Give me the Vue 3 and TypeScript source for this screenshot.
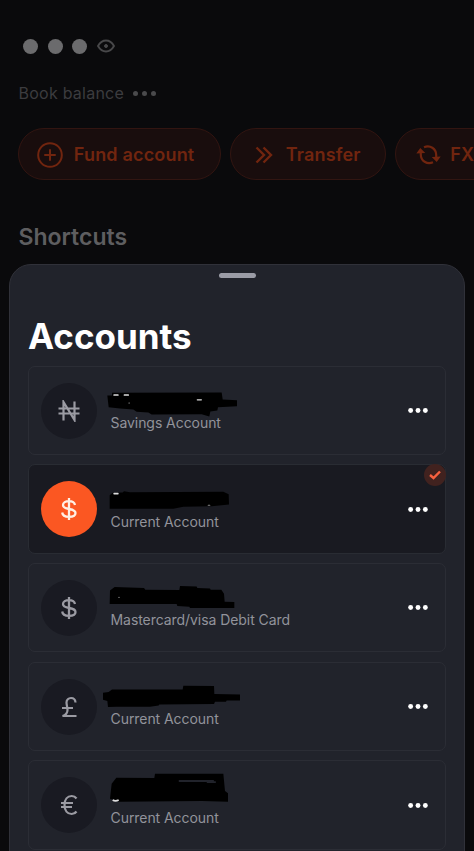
<script setup lang="ts">
interface Mark { x: number; y: number; w: number; h: number }
interface Account {
  symbol: string
  label: string
  selected?: boolean
  box: string
  mask: string
  marks: Mark[]
}

const accounts: Account[] = [
  {
    symbol: 'naira', label: 'Savings Account', box: '240 76.5 450 90',
    mask: '262,108 276,108 276,100 605,99 608,120 651,122 651,140 594,143 592,153 571,156 568,171 545,164 395,165 385,159 350,157 340,150 300,147 266,143',
    marks: [{ x: 280, y: 104, w: 16, h: 5 }, { x: 311, y: 104, w: 16, h: 5 }, { x: 325, y: 129, w: 5, h: 3 }, { x: 530, y: 119, w: 16, h: 4 }],
  },
  {
    symbol: 'dollar', label: 'Current Account', selected: true, box: '240 72.6 450 90',
    mask: '269,106 278,99 308,98 312,94 330,97 610,96 626,103 627,134 575,139 490,141 460,147 269,147',
    marks: [{ x: 280, y: 99, w: 16, h: 5 }, { x: 563, y: 135, w: 8, h: 3 }],
  },
  {
    symbol: 'dollar', label: 'Mastercard/visa Debit Card', box: '240 74.7 450 90',
    mask: '270,100 284,90 372,93 376,98 478,99 480,87 530,88 532,93 570,94 572,98 604,98 612,110 614,134 643,135 643,153 510,153 508,149 472,147 470,141 269,141',
    marks: [{ x: 295, y: 119, w: 4, h: 4 }],
  },
  {
    symbol: 'pound', label: 'Current Account', box: '240 79.8 450 90',
    mask: '249,115 266,113 276,105 488,105 490,94 582,95 583,119 660,120 660,138 620,138 618,142 585,142 582,149 418,150 416,153 390,157 290,157 264,158 262,140 249,136',
    marks: [],
  },
  {
    symbol: 'euro', label: 'Current Account', box: '300 84.9 450 90',
    mask: '335,96 349,78 463,79 465,66 670,66 675,118 684,125 684,150 605,148 358,150 330,141',
    marks: [{ x: 536, y: 85, w: 106, h: 6 }, { x: 620, y: 89, w: 28, h: 5 }],
  },
]
</script>

<template>
  <main class="screen">
    <div class="hidden-balance">
      <i v-for="n in 3" :key="n" class="big-dot"></i>
      <svg class="eye" viewBox="0 0 18 14" fill="none" stroke="currentColor" stroke-width="1.9" stroke-linejoin="round">
        <path d="M1 7C3 3.500 5.500 1.500 9 1.500S15 3.500 17 7C15 10.500 12.500 12.500 9 12.500S3 10.500 1 7Z" />
        <circle cx="9" cy="7" r="1.500" fill="currentColor" stroke-width="1" />
      </svg>
    </div>
    <div class="book"><span>Book balance</span><span class="book-dots"><i v-for="n in 3" :key="n"></i></span></div>
    <div class="actions">
      <button class="pill fund">
        <svg width="26" height="26" viewBox="0 0 26 26" fill="none" stroke="currentColor" stroke-width="2" stroke-linecap="round">
          <circle cx="13" cy="13" r="11.800" /><path d="M13 8V18M8 13H18" />
        </svg>
        <span>Fund account</span>
      </button>
      <button class="pill transfer">
        <svg width="18" height="18" viewBox="0 0 18 18" fill="none" stroke="currentColor" stroke-width="2.400">
          <path d="M1.500 1.500L9 9L1.500 16.500M8.500 1.500L16 9L8.500 16.500" />
        </svg>
        <span>Transfer</span>
      </button>
      <button class="pill fx">
        <svg width="25" height="20" viewBox="0 0 25 20" fill="none" stroke="currentColor" stroke-width="2.200">
          <path d="M8 2.200C14 -.3 20.200 3.500 20.200 10V13M17 17.300C11 19.800 4.800 16 4.800 9.500V6.500" />
          <path d="M.3 8.500L4.300 3L9.300 8ZM15.700 12L20.700 17L24.700 11.500Z" fill="currentColor" stroke="none" />
        </svg>
        <span>FX</span>
      </button>
    </div>
    <h2>Shortcuts</h2>

    <section class="sheet">
      <div class="handle"></div>
      <h1>Accounts</h1>
      <div class="list">
        <article v-for="(a, i) in accounts" :key="i" class="card" :class="{ selected: a.selected }">
          <div class="avatar">
            <svg v-if="a.symbol === 'naira'" width="24" height="22" viewBox="0 0 24 22" fill="none" stroke="currentColor" stroke-width="2.200">
              <path d="M6.500 20.500V2L17.500 20V1.500M1.500 8.500H22.500M1.500 13.500H22.500" />
            </svg>
            <svg v-else-if="a.symbol === 'dollar'" width="16" height="24" viewBox="0 0 16 24" fill="none" stroke="currentColor" stroke-width="2.300">
              <path d="M8 1V23M14 8C13.500 5.500 11.500 4.200 8 4.200S2 5.800 2 8.100C2 10.600 4 11.400 8 12S14.500 13.700 14.500 16.100S12 19.900 8 19.900S1.500 18.200 1.200 15.500" />
            </svg>
            <svg v-else-if="a.symbol === 'pound'" width="16" height="22" viewBox="0 0 16 22" fill="none" stroke="currentColor" stroke-width="2.200">
              <path d="M14.500 6.500C14.300 3.500 12.500 2 10 2S5.500 3.800 5.500 6.500C5.500 9 6.500 11 6.500 14C6.500 17 5 19 1.500 20H15.500M1 12H12" />
            </svg>
            <svg v-else width="18" height="22" viewBox="0 0 18 22" fill="none" stroke="currentColor" stroke-width="2.200">
              <path d="M16.500 4.500C15.300 2.800 13.700 2 11.700 2C7.500 2 4.500 5.500 4.500 11S7.500 20 11.700 20C13.700 20 15.300 19.200 16.500 17.500M1 9H13M1 13H12" />
            </svg>
          </div>
          <div class="info">
            <svg class="mask" width="150" height="30" :viewBox="a.box">
              <polygon :points="a.mask" />
              <rect v-for="(m, k) in a.marks" :key="k" :x="m.x" :y="m.y" :width="m.w" :height="m.h" rx="2" :class="{ faint: a.symbol === 'euro', small: m.w < 9 }" />
              <path v-if="a.symbol === 'euro'" class="sliver" d="M338 145Q346 150 356 145" />
            </svg>
            <span class="label">{{ a.label }}</span>
          </div>
          <svg class="more" width="20" height="5" viewBox="0 0 20 5" fill="currentColor">
            <circle cx="2.650" cy="2.500" r="2.450" /><circle cx="10" cy="2.500" r="2.450" /><circle cx="17.350" cy="2.500" r="2.450" />
          </svg>
          <div v-if="a.selected" class="badge">
            <svg width="12" height="10" viewBox="0 0 12 10" fill="none" stroke="currentColor" stroke-width="2.400"><path d="M1 5L4.500 8L11 1.500" /></svg>
          </div>
        </article>
      </div>
    </section>
  </main>
</template>

<style>
body { margin: 0; background: #0a0a0c; overflow: hidden; }
</style>
<style scoped>
* { box-sizing: border-box; }
.screen { width: 474px; height: 851px; overflow: hidden; display: flex; flex-direction: column; background: #0a0a0c; font-family: Inter, "Liberation Sans", sans-serif; }
svg { display: block; flex: none; }
i { display: block; border-radius: 50%; background: currentColor; }
.hidden-balance { display: flex; align-items: center; gap: 9.500px; height: 16px; margin: 38.500px 0 0 23px; color: #6b6b6d; }
.big-dot { width: 15px; height: 15px; }
.eye { width: 18px; height: 14px; margin-left: .5px; color: #48484a; }
.book { display: flex; align-items: center; height: 20px; margin: 29.500px 0 0 18.500px; font-size: 16px; letter-spacing: .24px; color: #3c3c3f; }
.book-dots { display: flex; gap: 4px; margin: 1px 0 0 9px; color: #4a4a4c; }
.book-dots i { width: 5px; height: 5px; }
.actions { display: flex; gap: 9px; margin: 25px 0 0 18.300px; height: 52px; }
.pill { flex: none; display: flex; align-items: center; height: 52px; border: 1.500px solid #321511; border-radius: 26px; padding: 1px 0 0 18px; background: #190d0d; color: #71250f; font: 600 18px Inter, sans-serif; letter-spacing: .18px; white-space: nowrap; }
.fund { width: 203px; gap: 10.500px; }
.transfer { width: 156px; padding-left: 23.500px; gap: 13px; }
.fx { width: 120px; padding-left: 19.500px; gap: 9.500px; }
h2 { margin: 42.500px 0 0 18.500px; font-size: 23px; line-height: 28px; font-weight: 600; letter-spacing: 0; color: #5e5e60; }
.sheet { width: 456px; height: 620px; flex: none; margin: 13px 0 0 9px; border: 1.500px solid #303139; border-radius: 22px 22px 0 0; background: #21232b; padding: 8px 18px 0 18px; }
.handle { width: 37px; height: 5px; margin: 0 auto; border-radius: 2.500px; background: #9b9ca6; }
h1 { margin: 36px 0 0; font-size: 35px; line-height: 44px; font-weight: 700; letter-spacing: 0; color: #fff; }
.list { display: flex; flex-direction: column; gap: 9.200px; margin-top: 8px; }
.card { position: relative; flex: none; display: flex; height: 89.500px; border: 1.500px solid #2b2d35; border-radius: 7px; padding-left: 12px; }
.card.selected { background: #191a21; border-color: #292c33; }
.avatar { width: 56px; height: 56px; margin-top: 16px; border-radius: 50%; display: flex; align-items: center; justify-content: center; background: #191a22; color: #9b9ba3; }
.selected .avatar { background: #fb5722; color: #fff0e5; }
.info { margin: 18.500px 0 0 2.500px; display: flex; flex-direction: column; }
.mask { overflow: visible; fill: #000; }
.mask rect { fill: #ddd; }
.mask rect.small { fill: #888; }
.mask rect.faint { fill: #21232b; }
.sliver { fill: none; stroke: #ddd; stroke-width: 5; }
.label { margin: -1px 0 0 11px; font-size: 14px; line-height: 18px; letter-spacing: -.06px; color: #92939b; white-space: nowrap; }
.more { margin: 41.500px 17.500px 0 auto; color: #fff; }
.badge { position: absolute; right: -1px; top: -1px; width: 22px; height: 22px; border-radius: 50%; display: flex; align-items: center; justify-content: center; background: #41221f; color: #f7603f; }
</style>
